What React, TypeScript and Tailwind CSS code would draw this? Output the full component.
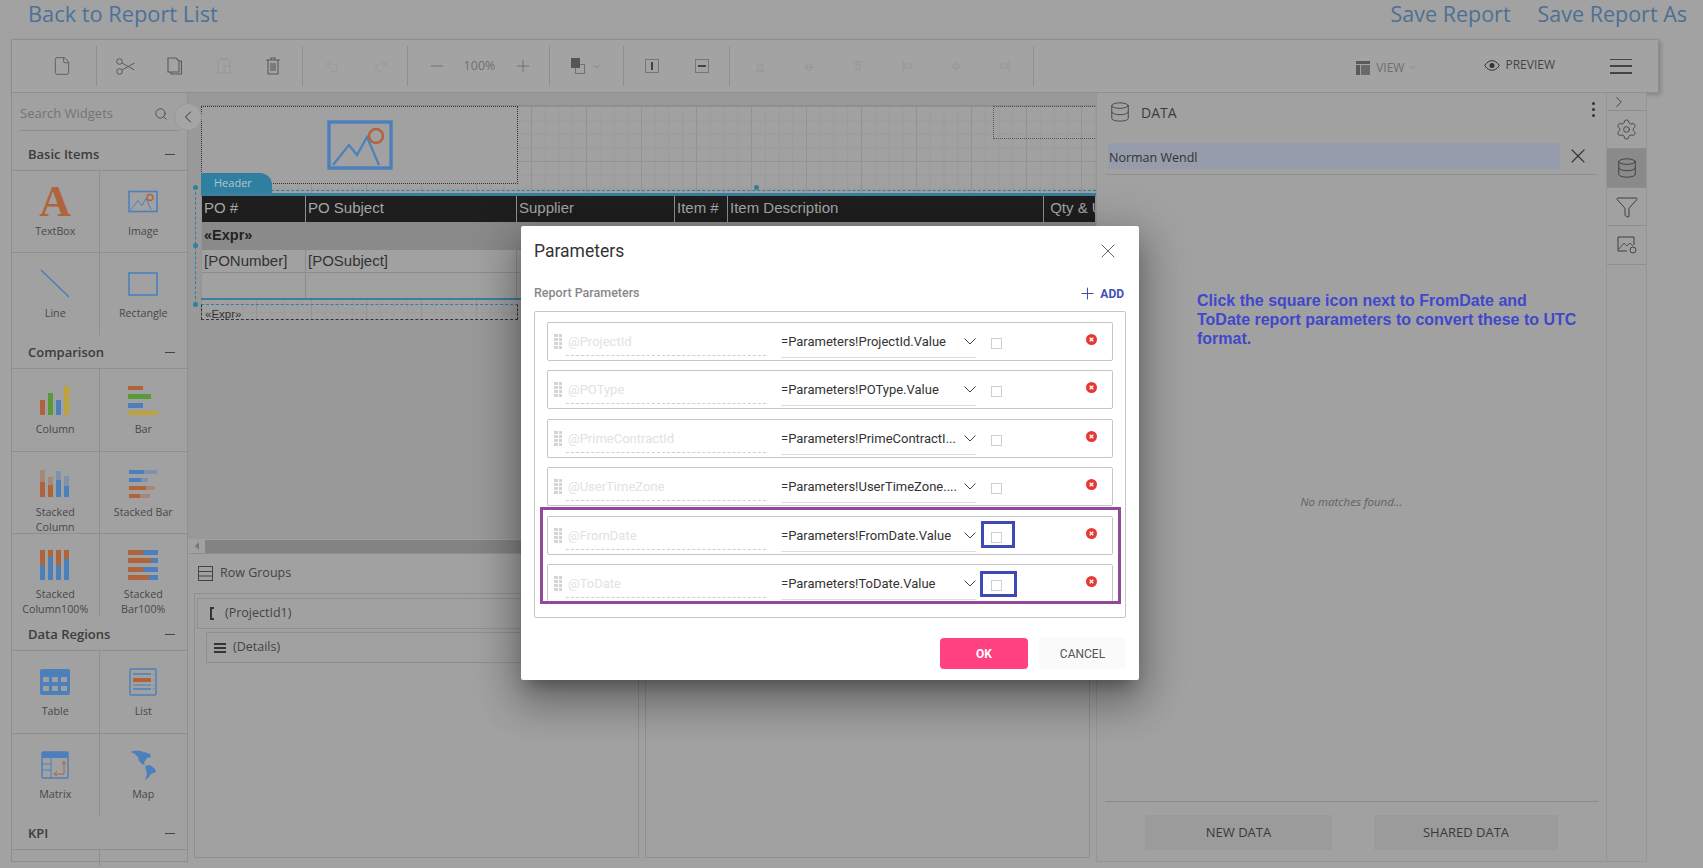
import type { ReactNode } from "react";
import {
  ChevronDown,
  ChevronLeft,
  ChevronRight,
  Database,
  File,
  Funnel,
  Minus,
  Plus,
  Redo2,
  Search,
  Settings,
  Undo2,
  X,
} from "lucide-react";

const open = "font-['Open_Sans',sans-serif]";
const roboto = "font-['Roboto',sans-serif]";

const BLUE = "#4b80bc";
const ORANGE = "#b0643c";
const GREEN = "#5b9a3a";
const YELLOW = "#bda338";

function Bars({ items }: { items: [number, number, number, number, string, number?][] }) {
  return (
    <svg width="32" height="30" viewBox="0 0 32 30">
      {items.map(([x, y, w, h, c, o], i) => (
        <rect key={i} x={x} y={y} width={w} height={h} fill={c} opacity={o ?? 1} />
      ))}
    </svg>
  );
}

function ImageGlyph({ w, h, stroke }: { w: number; h: number; stroke: number }) {
  return (
    <svg width={w} height={h} viewBox="0 0 30 22" fill="none">
      <rect x="1" y="1" width="28" height="20" stroke={BLUE} strokeWidth={stroke} />
      <path d="M3 19l7-9 4 5 4-7 5 11" stroke={BLUE} strokeWidth="1" />
      <circle cx="22" cy="7" r="3" stroke={ORANGE} strokeWidth="1.4" />
    </svg>
  );
}

const icons: Record<string, ReactNode> = {
  TextBox: <span className="font-['Liberation_Serif',serif] font-bold text-[44px] leading-[29px] text-[#b0643c]">A</span>,
  Image: <ImageGlyph w={30} h={23} stroke={1.6} />,
  Line: (
    <svg width="30" height="29" viewBox="0 0 30 29">
      <path d="M1 1l28 27" stroke={BLUE} strokeWidth="1.6" />
    </svg>
  ),
  Rectangle: (
    <svg width="30" height="24" viewBox="0 0 30 24" fill="none">
      <rect x="1" y="1" width="28" height="22" stroke={BLUE} strokeWidth="1.6" />
    </svg>
  ),
  Column: <Bars items={[[1, 15, 5, 15, ORANGE], [9, 8, 5, 22, GREEN], [17, 15, 5, 15, BLUE], [25, 1, 5, 29, YELLOW]]} />,
  Bar: <Bars items={[[1, 1, 15, 4, ORANGE], [1, 9, 23, 5, GREEN], [1, 18, 15, 5, BLUE], [1, 26, 30, 4, YELLOW]]} />,
  "Stacked Column": (
    <Bars
      items={[
        [1, 2, 5, 12, ORANGE, 0.4], [1, 14, 5, 15, ORANGE],
        [9, 9, 5, 8, ORANGE, 0.4], [9, 17, 5, 12, ORANGE],
        [17, 3, 5, 9, BLUE, 0.4], [17, 12, 5, 17, BLUE],
        [25, 8, 5, 10, BLUE, 0.4], [25, 18, 5, 11, BLUE],
      ]}
    />
  ),
  "Stacked Bar": (
    <Bars
      items={[
        [2, 2, 15, 4, BLUE], [17, 2, 13, 4, BLUE, 0.4],
        [2, 10, 12, 4, BLUE], [14, 10, 7, 4, BLUE, 0.4],
        [2, 18, 17, 4, ORANGE], [19, 18, 9, 4, ORANGE, 0.4],
        [2, 26, 11, 4, ORANGE], [13, 26, 10, 4, ORANGE, 0.4],
      ]}
    />
  ),
  "Stacked Column100%": (
    <Bars
      items={[
        [1, 0, 5, 15, ORANGE], [1, 15, 5, 15, BLUE],
        [9, 0, 5, 7, ORANGE], [9, 7, 5, 23, BLUE],
        [17, 0, 5, 15, ORANGE], [17, 15, 5, 15, BLUE],
        [25, 0, 5, 9, ORANGE], [25, 9, 5, 21, BLUE],
      ]}
    />
  ),
  "Stacked Bar100%": (
    <Bars
      items={[
        [1, 0, 15, 5, ORANGE], [16, 0, 15, 5, BLUE],
        [1, 8, 23, 5, ORANGE], [24, 8, 7, 5, BLUE],
        [1, 17, 15, 5, ORANGE], [16, 17, 15, 5, BLUE],
        [1, 25, 21, 5, ORANGE], [22, 25, 9, 5, BLUE],
      ]}
    />
  ),
  Table: (
    <svg width="30" height="26" viewBox="0 0 30 26">
      <rect width="30" height="26" rx="2" fill={BLUE} />
      {[3, 12, 21].flatMap((x) =>
        [8, 17].map((y) => <rect key={`${x}${y}`} x={x} y={y} width="6" height="5" fill="#a0a0a0" />),
      )}
    </svg>
  ),
  List: (
    <svg width="28" height="28" viewBox="0 0 28 28" fill="none">
      <rect x="1" y="1" width="26" height="26" rx="1" stroke={BLUE} strokeWidth="1.4" />
      <path d="M4 6h18M4 21h18" stroke={BLUE} strokeWidth="1.4" />
      <rect x="4" y="10" width="18" height="4" fill={ORANGE} />
      <path d="M4 17h18M24 6h1M24 12h1M24 17h1M24 21h1" stroke={BLUE} />
    </svg>
  ),
  Matrix: (
    <svg width="28" height="28" viewBox="0 0 28 28" fill="none">
      <rect x="1" y="1" width="26" height="26" rx="1" stroke={BLUE} strokeWidth="1.4" />
      <path d="M1 1h26v6H1z" fill={BLUE} />
      <path d="M1 13h9M1 19h9M10 7v20" stroke={BLUE} />
      <path d="M13 23h10V11M21 13l2-3 2 3M16 20l-3 3 3 2" stroke={ORANGE} />
    </svg>
  ),
  Map: (
    <svg width="26" height="30" viewBox="0 0 26 30">
      <path
        d="M1 2C5 0 10 1 14 2l6 2 1 3-4 1-2 3-1 2 1 2-3-1-3-3-1-4-3-3zM15 16l5-1 5 4 1 3-5 2-3 4-3 2 2-6-1-4z"
        fill={BLUE}
      />
    </svg>
  ),
};

type Section = { title: string; cls: string; rows: { cls: string; items: string[] }[] };

const sections: Section[] = [
  {
    title: "Basic Items",
    cls: "h-[40px] pt-[8px]",
    rows: [
      { cls: "h-[82px]", items: ["TextBox", "Image"] },
      { cls: "h-[82px]", items: ["Line", "Rectangle"] },
    ],
  },
  {
    title: "Comparison",
    cls: "h-[34px] pt-[2px]",
    rows: [
      { cls: "h-[83px]", items: ["Column", "Bar"] },
      { cls: "h-[82px]", items: ["Stacked Column", "Stacked Bar"] },
      { cls: "h-[83px]", items: ["Stacked Column100%", "Stacked Bar100%"] },
    ],
  },
  {
    title: "Data Regions",
    cls: "h-[34px] pt-[2px]",
    rows: [
      { cls: "h-[83px]", items: ["Table", "List"] },
      { cls: "h-[82px]", items: ["Matrix", "Map"] },
    ],
  },
  {
    title: "KPI",
    cls: "h-[34px] pt-[2px]",
    rows: [{ cls: "h-[12px]", items: ["", ""] }],
  },
];

function Sidebar() {
  return (
    <div className={`w-[177px] h-full shrink-0 border-x border-b border-[#8f8f8f] bg-[#a1a1a1] ${open}`}>
      <div className="h-[38px] mx-[7px] pl-[1px] pr-[12px] pt-[4px] flex items-center justify-between border-b border-[#8f8f8f] text-[13px] text-[#747474]">
        <span>Search Widgets</span>
        <Search className="size-[14px] text-[#444]" strokeWidth={1.4} />
      </div>
      {sections.map((s) => (
        <div key={s.title}>
          <div className={`${s.cls} pl-[16px] pr-[12px] flex items-center justify-between border-b border-[#8f8f8f] text-[13px] font-semibold text-[#3c3c3c]`}>
            <span>{s.title}</span>
            <span className="w-[10px] h-[1.5px] bg-[#444]" />
          </div>
          {s.rows.map((r, i) => (
            <div key={i} className={`${r.cls} grid grid-cols-2 border-b border-[#8f8f8f] last:border-b-0`}>
              {r.items.map((it, j) => (
                <div key={j} className="flex flex-col items-center pt-[16px] first:border-r border-[#8f8f8f] overflow-hidden">
                  <div className="h-[29px] flex items-center justify-center">{icons[it]}</div>
                  <div className="mt-[8px] w-[80px] text-center text-[10.7px] leading-[15px] text-[#484848]">{it}</div>
                </div>
              ))}
            </div>
          ))}
        </div>
      ))}
    </div>
  );
}

function Slot({ w, children }: { w: string; children?: ReactNode }) {
  return <div className={`${w} flex items-center justify-center`}>{children}</div>;
}

function Glyph({ d, color }: { d: string; color: string }) {
  return (
    <svg width="16" height="18" viewBox="0 0 16 18" fill="none" stroke={color} strokeWidth="1.1">
      <path d={d} />
    </svg>
  );
}

function Toolbar() {
  const sep = "h-[40px] flex items-center border-r border-[#8f8f8f]";
  const faded = "text-[#959595]";
  const dark = "text-[#5a5a5a]";
  return (
    <div className={`w-[1648px] h-[54px] shrink-0 flex items-center border border-[#8f8f8f] bg-[#a3a3a3] shadow-[2px_2px_4px_rgba(0,0,0,.18)] ${open}`}>
      <div className={`${sep} w-[85px] pl-[40px] ${dark}`}>
        <File className="size-[20px]" strokeWidth={1.1} />
      </div>
      <div className={`${sep} w-[206px] pl-[4px]`}>
        <Slot w="w-[49px]">
          <svg width="19" height="17" viewBox="0 0 19 17" fill="none" stroke="#5a5a5a">
            <circle cx="3.5" cy="3.5" r="2.8" />
            <circle cx="3.5" cy="13.5" r="2.8" />
            <path d="M6 5l12.5 7M6 12l12.5-7" />
          </svg>
        </Slot>
        <Slot w="w-[49px]"><Glyph d="M1 1h8l3 3v11H1zM12 4h2.500v13H4v-2" color="#5a5a5a" /></Slot>
        <Slot w="w-[49px]"><Glyph d="M2 3h12v13H2zM5 3V1h6v2M8 9h6v7H8z" color="#979797" /></Slot>
        <Slot w="w-[49px]"><Glyph d="M3 3h10v14H3zM1 3h14M6 3V1h4v2M6 6v8M8 6v8M10 6v8" color="#5a5a5a" /></Slot>
      </div>
      <div className={`${sep} w-[105px] pl-[4px] ${faded}`}>
        <Slot w="w-[49px]"><Undo2 className="size-[16px]" strokeWidth={1.1} /></Slot>
        <Slot w="w-[49px]"><Redo2 className="size-[16px]" strokeWidth={1.1} /></Slot>
      </div>
      <div className={`${sep} w-[142px] pl-[7px] text-[#6a6a6a]`}>
        <Slot w="w-[43px]"><Minus className="size-[20px]" strokeWidth={1} /></Slot>
        <Slot w="w-[43px]"><span className="text-[12.5px] text-[#707070]">100%</span></Slot>
        <Slot w="w-[43px]"><Plus className="size-[20px]" strokeWidth={1} /></Slot>
      </div>
      <div className={`${sep} w-[74px] pl-[21px] gap-[6px] ${dark}`}>
        <svg width="14" height="16" viewBox="0 0 14 16">
          <rect x="4.5" y="6.5" width="9" height="9" fill="none" stroke="#707070" />
          <rect width="9" height="10" fill="#565656" />
        </svg>
        <ChevronDown className="size-[11px]" strokeWidth={1} />
      </div>
      <div className={`${sep} w-[106px] pl-[3px]`}>
        <Slot w="w-[50px]">
          <svg width="14" height="14" viewBox="0 0 14 14">
            <rect x=".5" y=".5" width="13" height="13" fill="none" stroke="#777" />
            <rect x="6" y="3" width="2" height="8" fill="#444" />
          </svg>
        </Slot>
        <Slot w="w-[50px]">
          <svg width="14" height="14" viewBox="0 0 14 14">
            <rect x=".5" y=".5" width="13" height="13" fill="none" stroke="#777" />
            <rect x="3" y="6" width="8" height="2" fill="#444" />
          </svg>
        </Slot>
      </div>
      <div className={`${sep} w-[304px] pl-[5px]`}>
        {["M3 13h10M6 6h4v6H6z", "M3 9h10M6 6h4v6H6z", "M3 4h10M6 6h4v6H6z", "M4 3v10M6 6h6v4H6z", "M8 3v10M5 6h6v4H5z", "M12 3v10M4 6h6v4H4z"].map((d) => (
          <Slot key={d} w="w-[49px]">
            <svg width="16" height="16" viewBox="0 0 16 16" fill="none" stroke="#969696">
              <path d={d} />
            </svg>
          </Slot>
        ))}
      </div>
      <div className="ml-auto flex items-center pr-[26px]">
        <div className="flex items-center mt-[3px] text-[12px] text-[#6f6f6f]">
          <svg width="14" height="14" viewBox="0 0 14 14" className="mr-[6px]">
            <rect width="14" height="3" fill="#5a5a5a" />
            <rect y="4" width="4" height="10" fill="#5a5a5a" />
            <rect x="5" y="4" width="9" height="10" fill="#6a6a6a" />
          </svg>
          VIEW
          <ChevronDown className="size-[11px] ml-[3px]" strokeWidth={1} />
        </div>
        <div className="flex items-center ml-[66px] mr-[55px] -mt-[2px] text-[12px] text-[#444]">
          <svg width="16" height="11" viewBox="0 0 16 11" fill="none" className="mr-[5px]">
            <path d="M.7 5.500C3 2 5.500.7 8 .7s5 1.300 7.300 4.800C13 9 10.500 10.300 8 10.300S3 9 .7 5.500z" stroke="#333" />
            <circle cx="8" cy="5.500" r="2.500" fill="#333" />
          </svg>
          PREVIEW
        </div>
        <div className="w-[22px] h-[15px] flex flex-col justify-between">
          <span className="h-[1.5px] bg-[#444]" />
          <span className="h-[1.5px] bg-[#444]" />
          <span className="h-[1.5px] bg-[#444]" />
        </div>
      </div>
    </div>
  );
}

const columns = [
  { w: "w-[104px]", head: "PO #", cell: "[PONumber]" },
  { w: "w-[211px]", head: "PO Subject", cell: "[POSubject]" },
  { w: "w-[158px]", head: "Supplier", cell: "" },
  { w: "w-[53px]", head: "Item #", cell: "" },
  { w: "w-[316px]", head: "Item Description", cell: "" },
  { w: "w-[52px]", head: "\u00a0Qty & Unit", cell: "" },
];

function Dot({ cls }: { cls: string }) {
  return <span className={`absolute size-[5px] rounded-full bg-[#2f7fa0] ${cls}`} />;
}

function ReportSheet() {
  return (
    <div className="relative h-[446px] shrink-0 pl-[13px] pt-[12px] overflow-hidden bg-[#999999] font-['Liberation_Sans',sans-serif]">
      <div className="w-[895px] h-[215px] overflow-hidden border-t border-[#8a8a8a] bg-[#a1a1a1] bg-[linear-gradient(to_right,#939393_1px,transparent_1px),linear-gradient(to_bottom,#939393_1px,transparent_1px),linear-gradient(to_right,#9b9b9b_1px,transparent_1px),linear-gradient(to_bottom,#9b9b9b_1px,transparent_1px)] bg-[size:55px_55px,55px_55px,13.75px_13.75px,13.75px_13.75px]">
        <div className="relative h-[87px]">
          <div className="w-[317px] h-[78px] flex items-center justify-center border border-dotted border-[#333] bg-[#a1a1a1]">
            <svg width="66" height="50" viewBox="0 0 66 50" fill="none">
              <rect x="2" y="2" width="62" height="46" stroke={BLUE} strokeWidth="3.4" />
              <path d="M6 45l16-20 8 10 10-18 12 28" stroke={BLUE} strokeWidth="2.2" />
              <circle cx="49" cy="16" r="7" stroke={ORANGE} strokeWidth="2.6" />
            </svg>
          </div>
          <div className="absolute left-[792px] top-0 w-[104px] h-[33px] border border-dotted border-[#555]" />
          <div className="absolute left-0 right-0 top-[84px] border-t border-dashed border-[#2f7fa0]" />
          <div className="absolute left-0 top-[67px] w-[71px] h-[20px] rounded-tr-[12px] bg-[#2f7fa0] pl-[13px] text-[11px] leading-[20px] text-[#b5c5cc] font-['Open_Sans',sans-serif]">Header</div>
          <Dot cls="left-[553px] top-[79px]" />
        </div>
        <div className="h-[3px] bg-[#3b7f9c]" />
        <div className="flex ml-[1px] h-[26px] bg-[#1e1e1e] text-[15px] leading-[23px] text-[#a6a6a6]">
          {columns.map((c) => (
            <div key={c.head} className={`${c.w} shrink-0 pl-[2px] border-r border-[#8f8f8f] whitespace-nowrap overflow-hidden`}>{c.head}</div>
          ))}
        </div>
        <div className="ml-[1px] h-[28px] bg-[#8a8a8a] pl-[2px] text-[14.5px] font-bold leading-[26px] text-[#222]">«Expr»</div>
        <div className="flex ml-[1px] h-[23px] border-b border-[#8c8c8c] bg-[#a1a1a1] text-[15px] leading-[21px] text-[#333]">
          {columns.map((c) => (
            <div key={c.head} className={`${c.w} shrink-0 pl-[2px] border-r border-[#8c8c8c]`}>{c.cell}</div>
          ))}
        </div>
        <div className="flex ml-[1px] h-[25px] bg-[#a1a1a1]">
          {columns.map((c) => (
            <div key={c.head} className={`${c.w} shrink-0 border-r border-[#8c8c8c]`} />
          ))}
        </div>
        <div className="h-[2px] bg-[#3b7f9c]" />
        <div className="mt-[4px] w-[317px] h-[16px] border-t border-dashed border-[#2f7fa0] border-r border-b border-l border-l-[#333] border-r-[#333] border-b-[#333] pl-[3px] text-[11.5px] leading-[18px] text-[#333]">«Expr»</div>
      </div>
      <div className="absolute left-[7px] top-[94px] h-[117px] border-l border-dashed border-[#2f7fa0]" />
      <Dot cls="left-[5px] top-[92px]" />
      <Dot cls="left-[5px] top-[150px]" />
      <Dot cls="left-[5px] top-[209px]" />
    </div>
  );
}

function GroupPanel({ title, children }: { title: string; children?: ReactNode }) {
  return (
    <div className="w-[445px] flex flex-col h-full">
      <div className="h-[39px] flex items-center pl-[4px] text-[12.5px] text-[#444]">
        <svg width="15" height="15" viewBox="0 0 15 15" fill="none" stroke="#444" className="mr-[7px]">
          <rect x=".5" y=".5" width="14" height="14" />
          <path d="M.5 5.500h14M.5 10h14" />
        </svg>
        {title}
      </div>
      <div className="flex-1 border border-[#8f8f8f] pt-[4px] pl-[2px]">{children}</div>
    </div>
  );
}

function BottomPanels() {
  return (
    <div className={`flex-1 flex gap-[6px] pl-[6px] pr-[5px] pb-[4px] ${open}`}>
      <GroupPanel title="Row Groups">
        <div className="h-[31px] flex items-center pl-[12px] border border-[#8f8f8f] text-[12.5px] text-[#444]">
          <span className="w-[4px] h-[13px] mr-[11px] border-l-2 border-y-2 border-[#333]" />
          (ProjectId1)
        </div>
        <div className="ml-[9px] mt-[3px] h-[31px] flex items-center pl-[7px] border border-[#8f8f8f] text-[12.5px] text-[#444]">
          <span className="w-[12px] h-[10px] mr-[7px] flex flex-col justify-between">
            <span className="h-[2px] bg-[#333]" />
            <span className="h-[2px] bg-[#333]" />
            <span className="h-[2px] bg-[#333]" />
          </span>
          (Details)
        </div>
      </GroupPanel>
      <GroupPanel title="Column Groups" />
    </div>
  );
}

function DataPanel() {
  return (
    <div className={`w-[510px] shrink-0 h-full flex flex-col border-l border-b border-[#959595] bg-[#a1a1a1] ${open}`}>
      <div className="h-[50px] flex items-center pl-[12px] pr-[11px] pb-[12px] text-[14px] font-medium text-[#3c3c3c]">
        <Database className="size-[22px] mr-[10px] text-[#444]" strokeWidth={1} />
        DATA
        <span className="ml-auto -mt-[6px] flex flex-col gap-[3px]">
          <span className="size-[3px] rounded-full bg-[#333]" />
          <span className="size-[3px] rounded-full bg-[#333]" />
          <span className="size-[3px] rounded-full bg-[#333]" />
        </span>
      </div>
      <div className="mx-[9px] h-[32px] border-b border-[#8f8f8f] pl-[2px] pr-[7px] flex items-start justify-between">
        <div className="w-[452px] h-[26px] pl-[1px] bg-[#969cab] text-[12.5px] leading-[29px] text-[#333]">Norman Wendl</div>
        <X className="size-[24px] text-[#333] mt-px" strokeWidth={1.1} />
      </div>
      <div className="flex-1 flex items-center justify-center pt-[27px] text-[11.5px] italic text-[#626262]">No matches found...</div>
      <div className="mx-[8px] h-[60px] border-t border-[#8a8a8a] flex justify-center gap-[42px] pt-[13px] text-[13px] text-[#3a3a3a]">
        <div className="w-[187px] h-[35px] flex items-center justify-center bg-[#9b9b9b]">NEW DATA</div>
        <div className="w-[184px] h-[35px] flex items-center justify-center bg-[#9b9b9b]">SHARED DATA</div>
      </div>
    </div>
  );
}

function RightStrip() {
  const item = "flex items-center justify-center border-b border-[#8f8f8f] text-[#3c3c3c]";
  return (
    <div className="w-[41px] shrink-0 h-full border-x border-b border-[#959595] bg-[#a1a1a1]">
      <div className={`${item} h-[18px] justify-start pl-[3px]`}>
        <ChevronRight className="size-[18px]" strokeWidth={1.2} />
      </div>
      <div className={`${item} h-[38px]`}>
        <Settings className="size-[23px]" strokeWidth={0.9} />
      </div>
      <div className={`${item} h-[39px] bg-[#8a8a8a]`}>
        <Database className="size-[22px]" strokeWidth={1} />
      </div>
      <div className={`${item} h-[38px]`}>
        <Funnel className="size-[24px]" strokeWidth={1} />
      </div>
      <div className={`${item} h-[39px]`}>
        <svg width="20" height="18" viewBox="0 0 20 18" fill="none" stroke="#3c3c3c">
          <path d="M10 15H1V1h16v8" />
          <path d="M2 13l5-6 3 3 3-3 3 3" strokeWidth=".8" />
          <circle cx="16" cy="14" r="3" strokeWidth=".9" />
        </svg>
      </div>
    </div>
  );
}

function ParamRow({ name, value }: { name: string; value: string }) {
  return (
    <div className="h-[39px] flex items-start pl-[6px] border border-[#c6c6c6] rounded-[2px]">
      <div className="mt-[11px] w-[8px] h-[15px] grid grid-cols-2 gap-[1px]">
        {Array.from({ length: 8 }).map((_, i) => (
          <span key={i} className="bg-[#d4d4d4]" />
        ))}
      </div>
      <div className="ml-[4px] w-[200px] h-[33px] pl-[2px] border-b border-dashed border-[#cfcfcf] text-[13px] leading-[38px] text-[#e2e2e2]">{name}</div>
      <div className="ml-[15px] w-[195px] h-[35px] flex items-start justify-between border-b border-[#dedede] text-[13px] leading-[38px] text-[#333]">
        <span className="whitespace-nowrap">{value}</span>
        <svg width="12" height="7" viewBox="0 0 12 7" fill="none" stroke="#444" className="mt-[15px] shrink-0">
          <path d="M.5.500L6 6 11.500.500" />
        </svg>
      </div>
      <span className="ml-[15px] mt-[15px] size-[11px] border border-[#cfcfcf]" />
      <svg width="11" height="11" viewBox="0 0 11 11" className="ml-auto mr-[15px] mt-[11px]">
        <circle cx="5.500" cy="5.500" r="5.500" fill="#e53935" />
        <path d="M3.700 3.700l3.600 3.600M7.300 3.700l-3.600 3.600" stroke="#fff" strokeWidth="1.3" />
      </svg>
    </div>
  );
}

const params = [
  ["@ProjectId", "=Parameters!ProjectId.Value"],
  ["@POType", "=Parameters!POType.Value"],
  ["@PrimeContractId", "=Parameters!PrimeContractI..."],
  ["@UserTimeZone", "=Parameters!UserTimeZone...."],
  ["@FromDate", "=Parameters!FromDate.Value"],
  ["@ToDate", "=Parameters!ToDate.Value"],
];

function ParametersDialog() {
  return (
    <div className={`absolute left-[521px] top-[226px] w-[618px] h-[454px] rounded-[2px] bg-white px-[13px] shadow-[0_11px_15px_-7px_rgba(0,0,0,.3),0_24px_38px_3px_rgba(0,0,0,.2),0_9px_46px_8px_rgba(0,0,0,.2)] ${roboto}`}>
      <div className="h-[50px] flex items-center justify-between pr-[6px] text-[17.5px] text-[#333]">
        Parameters
        <X className="size-[24px] text-[#666]" strokeWidth={1} />
      </div>
      <div className="h-[35px] flex items-center justify-between pr-[2px] text-[12.5px] font-medium text-[#888]">
        Report Parameters
        <span className="flex items-center text-[12px] font-bold text-[#3f51b5]">
          <Plus className="size-[19px] mr-[3px]" strokeWidth={1.3} />
          ADD
        </span>
      </div>
      <div className="h-[307px] border border-[#c6c6c6] rounded-[2px] px-[12px] pt-[10px] flex flex-col gap-[9.4px]">
        {params.map(([n, v]) => (
          <ParamRow key={n} name={n} value={v} />
        ))}
      </div>
      <div className="mt-[20px] flex justify-end gap-[11px] text-[12px]">
        <button className="w-[88px] h-[31px] rounded-[4px] bg-[#ff4081] font-bold text-white">OK</button>
        <button className="w-[87px] h-[31px] rounded-[4px] bg-[#fafafa] text-[#555]">CANCEL</button>
      </div>
      <div className="absolute left-[19px] top-[281px] w-[581px] h-[97px] border-[3px] border-[#91499a]" />
      <div className="absolute left-[460px] top-[295px] w-[34px] h-[27px] border-[3px] border-[#3f48b5]" />
      <div className="absolute left-[459px] top-[345px] w-[37px] h-[26px] border-[3px] border-[#3f48b5]" />
    </div>
  );
}

export default function App() {
  return (
    <div className="relative w-[1703px] h-[868px] overflow-hidden bg-[#a2a2a2]">
      <div className={`h-[39px] flex items-center justify-between pl-[28px] pr-[16px] pb-[10px] text-[21.8px] text-[#4a7299] ${open}`}>
        <span>Back to Report List</span>
        <span className="flex gap-[27px] text-[21.5px] text-[#4d7092]">
          <span>Save Report</span>
          <span>Save Report As</span>
        </span>
      </div>
      <div className="pl-[11px] flex flex-col">
        <Toolbar />
        <div className="w-[1636px] h-[769px] flex">
          <Sidebar />
          <div className="w-[908px] shrink-0 flex flex-col bg-[#a1a1a1]">
            <ReportSheet />
            <div className="h-[15px] shrink-0 flex items-center pl-[7px] border-b border-[#8f8f8f]">
              <span className="size-0 border-y-[4px] border-y-transparent border-r-[4px] border-r-[#777]" />
              <span className="ml-[6px] w-[880px] h-[13px] bg-[#838383]" />
            </div>
            <BottomPanels />
          </div>
          <DataPanel />
          <RightStrip />
        </div>
      </div>
      <div className="absolute left-[174px] top-[103px] size-[28px] rounded-full bg-[#a5a5a5] border border-[#989898] flex items-center justify-center text-[#333]">
        <ChevronLeft className="size-[20px]" strokeWidth={1.2} />
      </div>
      <ParametersDialog />
      <div className="absolute left-[1197px] top-[291px] w-[380px] font-['Liberation_Sans',sans-serif] text-[16px] font-bold leading-[19px] text-[#3f48cc]">
        Click the square icon next to FromDate and ToDate report parameters to convert these to UTC format.
      </div>
    </div>
  );
}
